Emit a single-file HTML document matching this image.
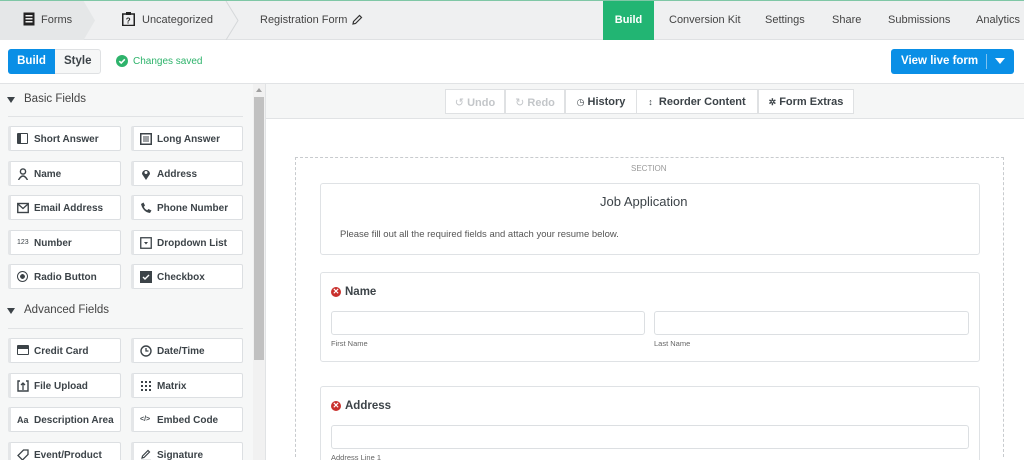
<!DOCTYPE html>
<html><head><meta charset="utf-8"><style>
*{box-sizing:border-box;margin:0;padding:0}
html{width:1024px;height:460px;overflow:hidden}
body{width:1024px;height:460px;overflow:hidden;font-family:"Liberation Sans",sans-serif;background:#fff;position:relative;color:#333}
.a{position:absolute}
.top{left:0;top:0;width:1024px;height:40px;background:#eff0f1;border-bottom:1px solid #dfe1e3;border-top:1px solid #7fc7a6}
.tt{font-size:11px;color:#444;top:14px}
.fld{position:absolute;height:25px;background:#fff;border:1px solid #dcdfe2;border-left:3px solid #e4e6e8;border-radius:2px;font-size:10px;font-weight:bold;color:#3c4348;padding:7px 0 0 23px;white-space:nowrap}
.fld i{position:absolute;left:6px;top:6px;width:12px;height:12px;font-style:normal;font-size:9px;color:#3c4348}
.fld svg{position:absolute;left:6px;top:6px}
.ib{border:1.5px solid #3c4348;border-radius:1px}
.tb{position:absolute;top:89px;height:25px;border:1px solid #dfe1e3;background:#fff;font-size:11px;font-weight:bold;color:#3c4348;padding:6px 0 0 0;text-align:center}
.card{position:absolute;left:320px;width:660px;border:1.5px solid #dfe2e5;border-radius:3px;background:#fff}
.inp{position:absolute;height:24px;border:1px solid #dcdfe2;border-radius:3px;background:#fff}
.lbl{position:absolute;font-size:7.5px;color:#666}
.req{display:inline-block;width:10px;height:10px;border-radius:50%;background:#c9302c;color:#fff;font-size:8px;line-height:10px;text-align:center;vertical-align:1px;margin-right:4px}
.sh{font-size:11.5px;color:#444}
</style></head><body>
<div class="a top"></div>
<div class="a" style="left:0;top:1px;width:95px;height:39px;background:#e5e7e8;clip-path:polygon(0 0,88% 0,100% 50%,88% 100%,0 100%)"></div>
<svg class="a" style="left:23px;top:12px" width="12" height="14"><rect x="0.5" y="0.5" width="11" height="13" fill="#222"/><rect x="2.5" y="3" width="7" height="1.5" fill="#eee"/><rect x="2.5" y="6" width="7" height="1.5" fill="#eee"/><rect x="2.5" y="9" width="7" height="1.5" fill="#eee"/></svg>
<div class="a tt" style="left:41px">Forms</div>
<svg class="a" style="left:224px;top:1px" width="20" height="39"><path d="M2 0 L14 19.5 L2 39" stroke="#d5d8da" fill="none"/></svg>
<svg class="a" style="left:122px;top:12px" width="13" height="14"><rect x="0.75" y="2" width="11.5" height="11.5" fill="none" stroke="#222" stroke-width="1.5"/><rect x="4" y="0" width="5" height="3" fill="#222"/><text x="3.8" y="11.5" font-size="8" font-weight="bold" fill="#222" font-family="Liberation Sans">?</text></svg>
<div class="a tt" style="left:142px">Uncategorized</div>
<div class="a tt" style="left:260px">Registration Form</div>
<svg class="a" style="left:351px;top:14px" width="12" height="12"><path d="M2 10 L2.5 7.5 L8.5 1.5 L10.5 3.5 L4.5 9.5 Z" fill="none" stroke="#333" stroke-width="1.2"/></svg>
<div class="a" style="left:603px;top:1px;width:51px;height:39px;background:#22b573;color:#fff;font-size:11px;font-weight:bold;text-align:center;padding-top:13px">Build</div>
<div class="a tt" style="left:669px">Conversion Kit</div>
<div class="a tt" style="left:765px">Settings</div>
<div class="a tt" style="left:832px">Share</div>
<div class="a tt" style="left:888px">Submissions</div>
<div class="a tt" style="left:976px">Analytics</div>

<div class="a" style="left:8px;top:49px;width:93px;height:25px;border:1px solid #dfe1e3;border-radius:3px;background:#f6f7f7"></div>
<div class="a" style="left:8px;top:49px;width:47px;height:25px;background:#0a8fe6;border-radius:3px 0 0 3px;color:#fff;font-size:11.5px;font-weight:bold;text-align:center;padding-top:6px">Build</div>
<div class="a" style="left:64px;top:55px;font-size:11.5px;font-weight:bold;color:#3c4348">Style</div>
<div class="a" style="left:116px;top:55px;width:12px;height:12px;border-radius:50%;background:#2eb36b"></div>
<svg class="a" style="left:116px;top:55px" width="12" height="12"><path d="M3.3 6.2 L5.2 8 L8.8 4.3" stroke="#fff" stroke-width="1.6" fill="none"/></svg>
<div class="a" style="left:133px;top:56px;font-size:10px;color:#2eb36b">Changes saved</div>
<div class="a" style="left:891px;top:49px;width:123px;height:25px;background:#0a8fe6;border-radius:3px;color:#fff;font-size:11.5px;font-weight:bold;padding:6px 0 0 10px">View live form</div>
<div class="a" style="left:986px;top:54px;width:1px;height:15px;background:#7fc2f0"></div>
<svg class="a" style="left:994px;top:57px" width="12" height="8"><path d="M1 1 L11 1 L6 7Z" fill="#fff"/></svg>
<div class="a" style="left:0;top:83px;width:1024px;height:1px;background:#e1e3e5"></div>

<div class="a" style="left:0;top:84px;width:266px;height:376px;background:#f6f7f7;border-right:1px solid #e1e3e5"></div>
<div class="a" style="left:253px;top:84px;width:12px;height:376px;background:#f1f1f1"></div>
<div class="a" style="left:254px;top:97px;width:10px;height:263px;background:#c1c1c1"></div>
<svg class="a" style="left:256px;top:88px" width="6" height="5"><path d="M0 4 L3 0 L6 4Z" fill="#a0a0a0"/></svg>
<svg class="a" style="left:7px;top:97px" width="8" height="6"><path d="M0 0 L8 0 L4 6Z" fill="#3c4348"/></svg>
<div class="a sh" style="left:24px;top:93px">Basic Fields</div>
<div class="a" style="left:8px;top:116px;width:235px;height:1px;background:#e1e3e5"></div>
<svg class="a" style="left:7px;top:308px" width="8" height="6"><path d="M0 0 L8 0 L4 6Z" fill="#3c4348"/></svg>
<div class="a sh" style="left:24px;top:304px">Advanced Fields</div>
<div class="a" style="left:8px;top:328px;width:235px;height:1px;background:#e1e3e5"></div>

<div class="fld" style="left:8px;top:126px;width:113px"><i class="ib" style="width:11px;height:11px;border-left-width:4px"></i>Short Answer</div>
<div class="fld" style="left:131px;top:126px;width:112px"><svg width="12" height="12"><rect x="0.75" y="0.75" width="10.5" height="10.5" fill="none" stroke="#3c4348" stroke-width="1.5"/><path d="M3 4H9M3 6H9M3 8H9" stroke="#3c4348"/></svg>Long Answer</div>
<div class="fld" style="left:8px;top:161px;width:113px"><svg width="12" height="12"><circle cx="6" cy="3.5" r="2.6" fill="none" stroke="#3c4348" stroke-width="1.4"/><path d="M1.5 12 Q6 4 10.5 12" fill="none" stroke="#3c4348" stroke-width="1.4"/></svg>Name</div>
<div class="fld" style="left:131px;top:161px;width:112px"><svg width="12" height="12"><path d="M6 12 L2 6 A4 4 0 1 1 10 6Z" fill="#3c4348"/><circle cx="6" cy="4.5" r="1.5" fill="#fff"/></svg>Address</div>
<div class="fld" style="left:8px;top:195px;width:113px"><svg width="12" height="12"><rect x="0.75" y="1.5" width="10.5" height="9" fill="none" stroke="#3c4348" stroke-width="1.4"/><path d="M1 2 L6 6.5 L11 2" fill="none" stroke="#3c4348" stroke-width="1.3"/></svg>Email Address</div>
<div class="fld" style="left:131px;top:195px;width:112px"><svg width="12" height="12"><path d="M1 2 L3.5 0.5 L5 3.5 L3.8 4.8 Q5 7.5 7.2 8.2 L8.5 7 L11.5 8.5 L10 11 Q3 10 1 2Z" fill="#3c4348"/></svg>Phone Number</div>
<div class="fld" style="left:8px;top:230px;width:113px"><i style="font-size:7px;top:8px;font-weight:normal">123</i>Number</div>
<div class="fld" style="left:131px;top:230px;width:112px"><svg width="12" height="12"><rect x="0.75" y="0.75" width="10.5" height="10.5" fill="none" stroke="#3c4348" stroke-width="1.3"/><path d="M4 5 L8 5 L6 7.5Z" fill="#3c4348"/></svg>Dropdown List</div>
<div class="fld" style="left:8px;top:264px;width:113px"><i style="width:11px;height:11px;border:1.5px solid #3c4348;border-radius:50%;background:radial-gradient(#3c4348 35%,transparent 40%)"></i>Radio Button</div>
<div class="fld" style="left:131px;top:264px;width:112px"><svg width="12" height="12"><rect width="12" height="12" fill="#3c4348"/><path d="M3 6 L5 8 L9 4" stroke="#fff" stroke-width="1.4" fill="none"/></svg>Checkbox</div>
<div class="fld" style="left:8px;top:338px;width:113px"><i class="ib" style="width:12px;height:10px;border-top-width:4px"></i>Credit Card</div>
<div class="fld" style="left:131px;top:338px;width:112px"><svg width="12" height="12"><circle cx="6" cy="6" r="5" fill="none" stroke="#3c4348" stroke-width="1.4"/><path d="M6 3 V6 H8.5" fill="none" stroke="#3c4348" stroke-width="1.3"/></svg>Date/Time</div>
<div class="fld" style="left:8px;top:373px;width:113px"><svg width="12" height="12"><path d="M3 1 H1 V11 H11 V1 H9" fill="none" stroke="#3c4348" stroke-width="1.4"/><path d="M6 10 V3 M4 5 L6 3 L8 5" fill="none" stroke="#3c4348" stroke-width="1.3"/></svg>File Upload</div>
<div class="fld" style="left:131px;top:373px;width:112px"><svg width="12" height="12"><g fill="#3c4348"><rect x="1" y="1" width="2" height="2"/><rect x="5" y="1" width="2" height="2"/><rect x="9" y="1" width="2" height="2"/><rect x="1" y="5" width="2" height="2"/><rect x="5" y="5" width="2" height="2"/><rect x="9" y="5" width="2" height="2"/><rect x="1" y="9" width="2" height="2"/><rect x="5" y="9" width="2" height="2"/><rect x="9" y="9" width="2" height="2"/></g></svg>Matrix</div>
<div class="fld" style="left:8px;top:407px;width:113px"><i style="font-size:9px;top:7px">Aa</i>Description Area</div>
<div class="fld" style="left:131px;top:407px;width:112px"><i style="font-size:7px;top:8px">&lt;/&gt;</i>Embed Code</div>
<div class="fld" style="left:8px;top:442px;width:113px"><svg width="12" height="12"><path d="M6.5 1 H11 V5.5 L5.5 11 L1 6.5Z" fill="none" stroke="#3c4348" stroke-width="1.3"/></svg>Event/Product</div>
<div class="fld" style="left:131px;top:442px;width:112px"><svg width="12" height="12"><path d="M2 9 L2.5 7 L8 1.5 L9.5 3 L4 8.5Z M1 11.5 H11" fill="none" stroke="#3c4348" stroke-width="1.2"/></svg>Signature</div>

<div class="a" style="left:266px;top:84px;width:758px;height:35px;background:#f5f6f6;border-bottom:1px solid #e1e3e5"></div>
<div class="tb" style="left:445px;width:60px;color:#c3c6c9"><span style="font-weight:normal">↺</span> Undo</div>
<div class="tb" style="left:505px;width:60px;color:#c3c6c9"><span style="font-weight:normal">↻</span> Redo</div>
<div class="tb" style="left:565px;width:72px"><span style="font-weight:normal;font-size:9px">◷</span> History</div>
<div class="tb" style="left:636px;width:122px"><span style="font-weight:normal;font-size:9px">↕</span>&nbsp; Reorder Content</div>
<div class="tb" style="left:758px;width:96px"><span style="font-size:9px">✲</span> Form Extras</div>

<div class="a" style="left:295px;top:157px;width:709px;height:300px;border:1px dashed #c8cbce;border-bottom:none"></div>
<div class="a" style="left:631px;top:164px;font-size:8px;color:#999">SECTION</div>
<div class="card" style="top:183px;height:72px"></div>
<div class="a" style="left:600px;top:194px;font-size:13px;color:#3c4348">Job Application</div>
<div class="a" style="left:340px;top:229px;font-size:9.5px;color:#555">Please fill out all the required fields and attach your resume below.</div>

<div class="card" style="top:272px;height:90px"></div>
<div class="a" style="left:331px;top:286px;font-size:11.5px;font-weight:bold;color:#3c4348"><span class="req">✕</span>Name</div>
<div class="inp" style="left:331px;top:311px;width:314px"></div>
<div class="inp" style="left:654px;top:311px;width:315px"></div>
<div class="lbl" style="left:331px;top:339px">First Name</div>
<div class="lbl" style="left:654px;top:339px">Last Name</div>

<div class="card" style="top:386px;height:80px;border-bottom:none"></div>
<div class="a" style="left:331px;top:400px;font-size:11.5px;font-weight:bold;color:#3c4348"><span class="req">✕</span>Address</div>
<div class="inp" style="left:331px;top:425px;width:638px"></div>
<div class="lbl" style="left:331px;top:453px">Address Line 1</div>
</body></html>
